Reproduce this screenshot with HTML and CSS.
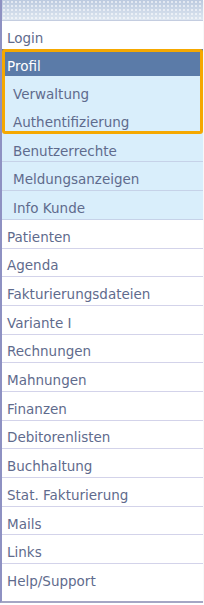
FILE: index.html
```html
<!DOCTYPE html>
<html lang="de">
  <head>
    <meta charset="UTF-8" />
    <meta name="viewport" content="width=device-width, initial-scale=1.0" />
    <title>Menü</title>
    <link rel="stylesheet" href="styles.css">
  </head>
  <body>
    <div class="sidebar">
      <div class="sidebar-head"></div>

      <ul class="menu">
        <li><a href="#">Login</a></li>
        <li class="group">
          <a href="#" class="active">Profil</a>
          <a href="#" class="sub">Verwaltung</a>
          <a href="#" class="sub">Authentifizierung</a>
        </li>
        <li class="sub"><a href="#">Benutzerrechte</a></li>
        <li class="sub"><a href="#">Meldungsanzeigen</a></li>
        <li class="sub"><a href="#">Info Kunde</a></li>
        <li><a href="#">Patienten</a></li>
        <li><a href="#">Agenda</a></li>
        <li><a href="#">Fakturierungsdateien</a></li>
        <li><a href="#">Variante I</a></li>
        <li><a href="#">Rechnungen</a></li>
        <li><a href="#">Mahnungen</a></li>
        <li><a href="#">Finanzen</a></li>
        <li><a href="#">Debitorenlisten</a></li>
        <li><a href="#">Buchhaltung</a></li>
        <li><a href="#">Stat. Fakturierung</a></li>
        <li><a href="#">Mails</a></li>
        <li><a href="#">Links</a></li>
        <li class="last"><a href="#">Help/Support</a></li>
      </ul>
    </div>
  </body>
</html>
```

FILE: styles.css
```css
* {
  margin: 0;
  padding: 0;
  box-sizing: border-box;
}

:root {
  --text-color: #5f6b8d;
  --line-color: #d3d3ea;
  --sub-bg: #d9eefb;
  --active-bg: #5b7ba8;
  --accent-color: #f5a800;
  --row-height: 27.7px;
}

body {
  background: #ffffff;
  font-family: "DejaVu Sans", Verdana, sans-serif;
  font-size: 13.5px;
}

.sidebar {
  width: 203px;
  height: 603px;
  border-left: 2px solid #8e91c2;
  border-bottom: 2px solid #a4a6c4;
  box-shadow: 0 1px 1px rgba(120, 120, 150, 0.3);
  background: #ffffff;
}

.sidebar-head {
  height: 21px;
  background-color: #c9d5e5;
  background-image:
    radial-gradient(circle, rgba(255, 255, 255, 0.55) 1px, transparent 1.4px),
    linear-gradient(#bccadf, #dde6f0);
  background-size: 4px 4px, 100% 100%;
  border-bottom: 1px solid #c4cde0;
}

.menu {
  list-style: none;
}

.menu li {
  border-bottom: 1px solid var(--line-color);
}

.menu a {
  display: flex;
  align-items: center;
  height: var(--row-height);
  padding: 6px 0 0 5px;
  color: var(--text-color);
  text-decoration: none;
}

.menu li.sub {
  background: var(--sub-bg);
  border-bottom-color: #c6d2e8;
}

.menu li.sub a,
.menu a.sub {
  padding-left: 11px;
}

.menu li.group {
  position: relative;
  background: var(--sub-bg);
  border-bottom: none;
  margin-top: -1px;
}

.menu li.group a {
  height: 28.7px;
}

.menu li.group::after {
  content: "";
  position: absolute;
  inset: 0;
  border: 3px solid var(--accent-color);
  border-radius: 3px;
  pointer-events: none;
}

.menu li.group a.active {
  background: var(--active-bg);
  color: #ffffff;
  height: 27.7px;
  padding-top: 7px;
}

.menu li.last {
  border-bottom: none;
}
```
